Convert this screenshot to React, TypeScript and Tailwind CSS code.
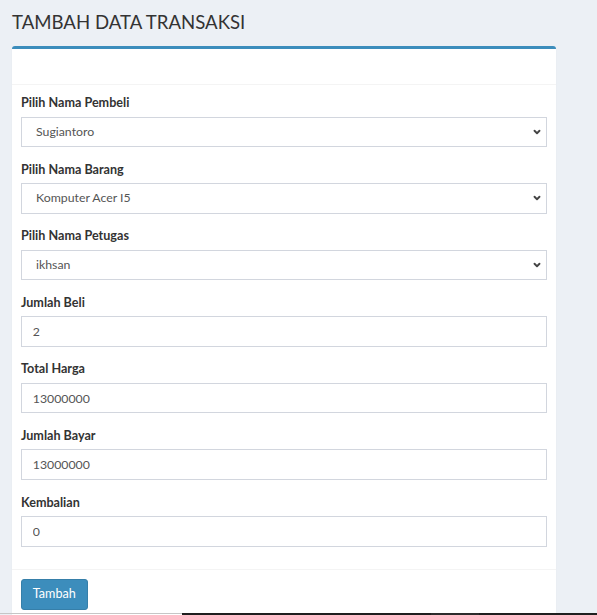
import { ChevronDown } from "lucide-react";

type Field = {
  label: string;
  value: string;
  select?: boolean;
};

const fields: Field[] = [
  { label: "Pilih Nama Pembeli", value: "Sugiantoro", select: true },
  { label: "Pilih Nama Barang", value: "Komputer Acer I5", select: true },
  { label: "Pilih Nama Petugas", value: "ikhsan", select: true },
  { label: "Jumlah Beli", value: "2" },
  { label: "Total Harga", value: "13000000" },
  { label: "Jumlah Bayar", value: "13000000" },
  { label: "Kembalian", value: "0" },
];

function FormField({ field }: { field: Field }) {
  return (
    <div className="mb-[13.5px]">
      <label className="mb-[4.5px] block text-[12.6px] leading-[18px] font-bold text-[#333]">
        {field.label}
      </label>
      {field.select ? (
        <div className="relative">
          <select
            defaultValue={field.value}
            className="block h-[30.6px] w-full appearance-none border border-[#d2d6de] bg-white pl-[14px] text-[12.3px] text-[#555] outline-none"
          >
            <option>{field.value}</option>
          </select>
          <ChevronDown
            className="pointer-events-none absolute top-[10px] right-[5px] h-[10px] w-[10px] text-[#444]"
            strokeWidth={4.5}
          />
        </div>
      ) : (
        <input
          readOnly
          value={field.value}
          className="block h-[30.6px] w-full border border-[#d2d6de] bg-white px-[10.8px] text-[12.3px] text-[#555] outline-none"
        />
      )}
    </div>
  );
}

export default function App() {
  return (
    <div
      className="min-h-screen bg-[#ecf0f5] text-[#333]"
      style={{ fontFamily: "Lato, 'Open Sans', sans-serif" }}
    >
      <section className="px-[12px] pt-[9px]">
        <h1 className="text-[18.6px] leading-[26px] font-normal text-[#333]">
          TAMBAH DATA TRANSAKSI
        </h1>
      </section>

      <section className="w-[556px] pt-[11px] pl-[12px]">
        <div className="rounded-[3px] border-t-[3px] border-[#3c8dbc] bg-white shadow-[0_1px_1px_rgba(0,0,0,0.1)]">
          <div className="h-[36px] border-b border-[#f4f4f4]" />

          <div className="px-[9px] pt-[9px] pb-[9px]">
            {fields.map((field) => (
              <FormField key={field.label} field={field} />
            ))}
          </div>

          <div className="border-t border-[#f4f4f4] p-[9px]">
            <button
              type="button"
              className="h-[30.6px] rounded-[3px] border border-[#367fa9] bg-[#3c8dbc] px-[10.8px] text-[12.6px] text-white"
            >
              Tambah
            </button>
          </div>
        </div>
      </section>

      <div className="fixed right-0 bottom-0 left-0 flex h-[2px]">
        <div className="h-px w-[182px] bg-[#c6c6c6]" />
        <div className="flex flex-1 bg-[#1f1f1f]">
          <div className="w-[249px]" />
          <div className="w-[48px] bg-[#2c2c2c]" />
        </div>
      </div>
    </div>
  );
}
